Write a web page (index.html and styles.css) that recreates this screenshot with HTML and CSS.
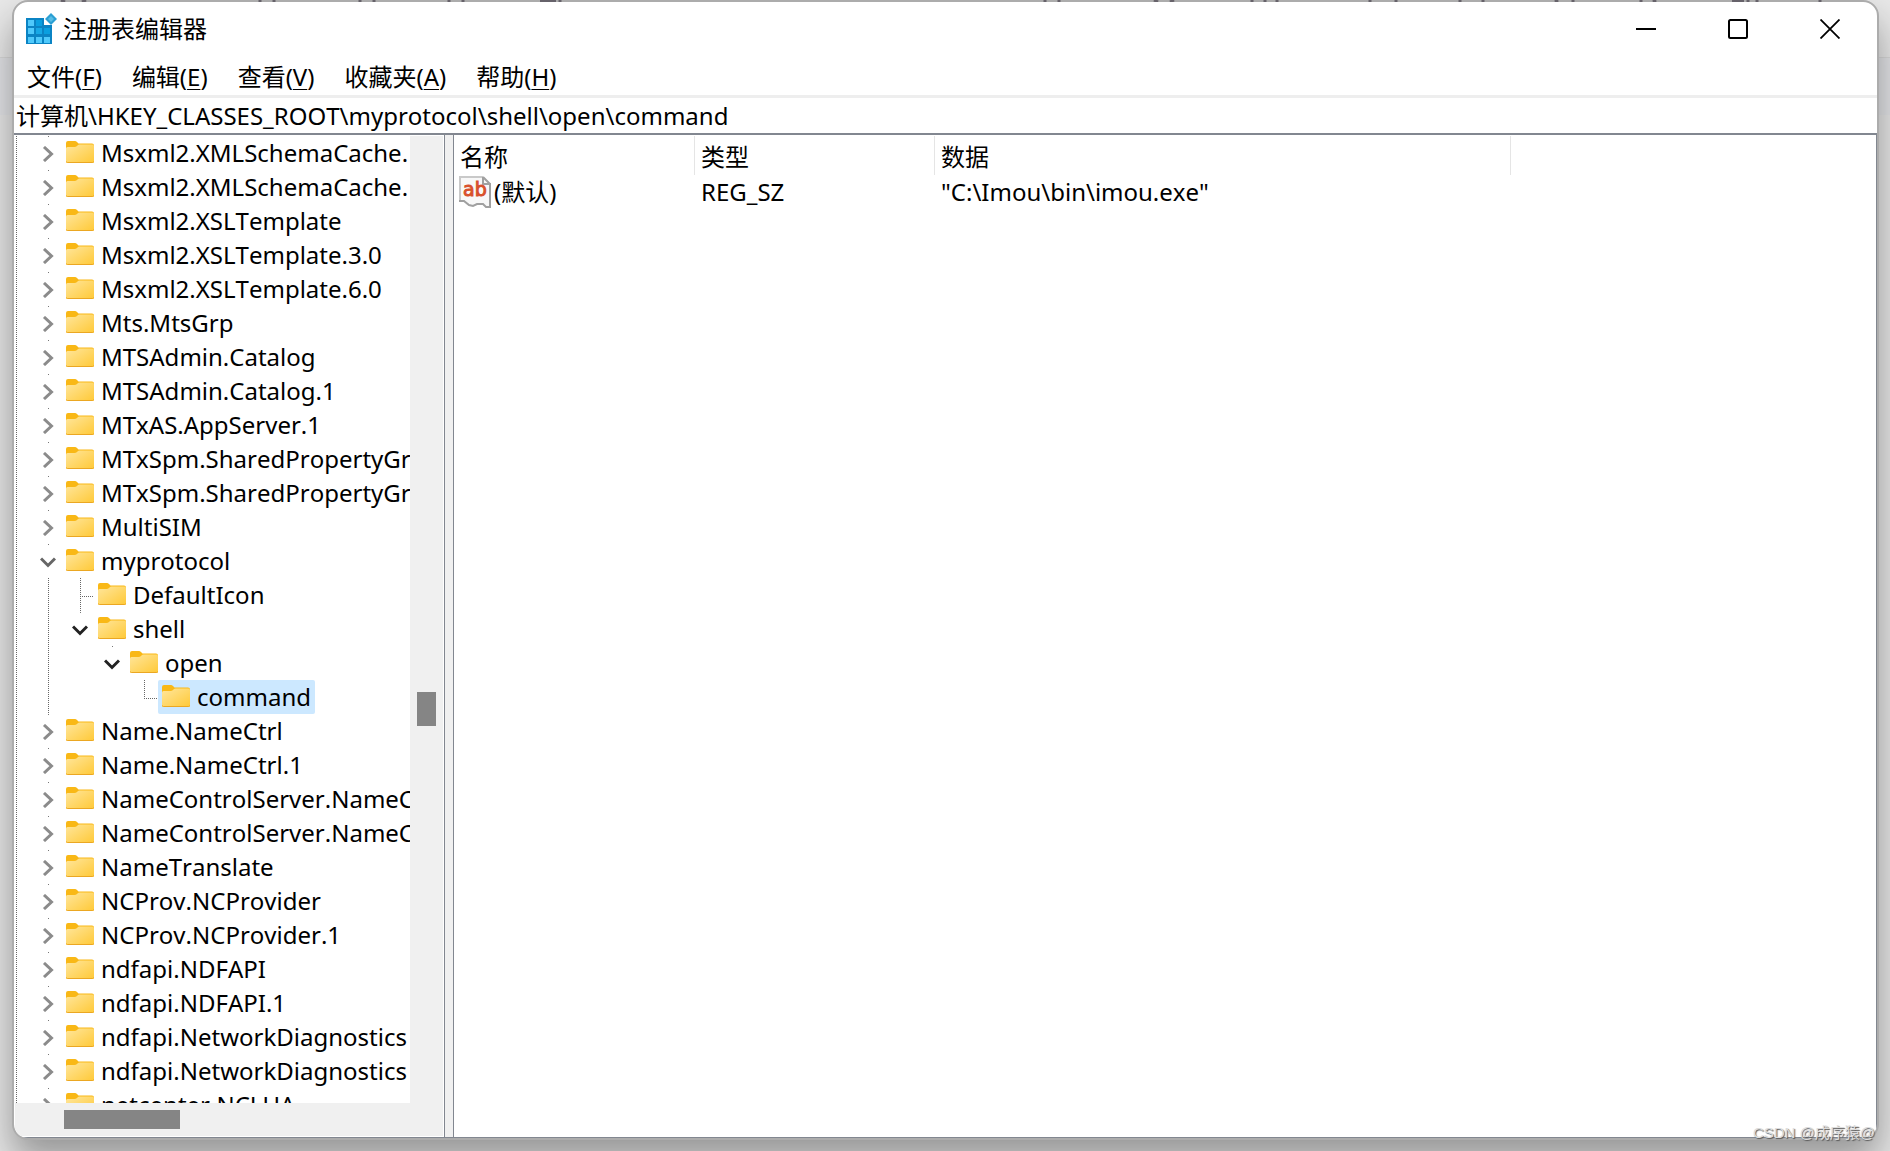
FILE: index.html
```
<!DOCTYPE html>
<html lang="zh-CN">
<head>
  <meta charset="UTF-8">
  <meta name="viewport" content="width=device-width, initial-scale=1.0">
  <title>注册表编辑器</title>
  <link rel="stylesheet" href="styles.css">
</head>
<body>
  <svg class="sprite" aria-hidden="true">
    <defs>
      <linearGradient id="folder-fill" x1="0" y1="0" x2="1" y2="1">
        <stop offset="0" stop-color="#ffe69c"/>
        <stop offset="1" stop-color="#ffc937"/>
      </linearGradient>
      <symbol id="folder" viewBox="0 0 28 22">
        <path d="M0 2Q0 0 2 0H9Q10 0 11 1L12.500 2.500H26Q28 2.500 28 4.500V8H0Z" fill="#f9b816"/>
        <path d="M0 7.500Q0 6 1.500 6H8.500Q10 6 11 5L12 4Q12.500 3.500 13.500 3.500H26.500Q28 3.500 28 5V20.500Q28 22 26.500 22H1.500Q0 22 0 20.500Z" fill="url(#folder-fill)"/>
        <path d="M0 20.300Q0.200 21.500 1.500 21.500H26.500Q27.800 21.500 28 20.300" fill="none" stroke="#eba722"/>
      </symbol>
      <symbol id="right" viewBox="0 0 16 16">
        <path d="M4 1L11.500 8L4 15" fill="none" stroke="#8b8b8b" stroke-width="3"/>
      </symbol>
      <symbol id="down" viewBox="0 0 16 16">
        <path d="M1 4.500L8 11.500L15 4.500" fill="none" stroke="currentColor" stroke-width="3"/>
      </symbol>
    </defs>
  </svg>

  <main class="window">
    <header class="titlebar">
      <svg class="app-icon" viewBox="0 0 32 32" aria-hidden="true">
        <path d="M0 5H18V12H26V31H0Z" fill="#0b84c4"/>
        <path d="M2 7H8V13H2ZM2 15H8V21H2ZM2 24H8V30H2ZM10 24H16V30H10ZM18 24H24V30H18Z" fill="#4fc9fb"/>
        <path d="M10 7H16V13H10ZM18 15H24V21H18Z" fill="#0a9fe0"/>
        <path d="M10 15H16V21H10Z" fill="#17a8e6"/>
        <path d="M25 0L31 6L25 12L19 6Z" fill="#2b9fd3"/>
        <path d="M25 3L28 6L25 9L22 6Z" fill="#58bde6"/>
      </svg>
      <h1>注册表编辑器</h1>
      <div class="controls">
        <button type="button" aria-label="最小化"><svg viewBox="0 0 20 20"><path d="M0 10H20" stroke-width="2"/></svg></button>
        <button type="button" aria-label="最大化"><svg viewBox="0 0 20 20"><rect x="1" y="1" width="18" height="18" rx="1.500" stroke-width="2"/></svg></button>
        <button type="button" aria-label="关闭"><svg viewBox="0 0 20 20"><path d="M0.500 0.500L19.500 19.500M19.500 0.500L0.500 19.500" stroke-width="1.800"/></svg></button>
      </div>
    </header>

    <nav class="menubar">
      <button type="button">文件(<u>F</u>)</button>
      <button type="button">编辑(<u>E</u>)</button>
      <button type="button">查看(<u>V</u>)</button>
      <button type="button">收藏夹(<u>A</u>)</button>
      <button type="button">帮助(<u>H</u>)</button>
    </nav>

    <input class="address" type="text" aria-label="地址" value="计算机\HKEY_CLASSES_ROOT\myprotocol\shell\open\command">

    <div class="panes">
      <section class="tree-pane">
        <div class="tree" role="tree">
          <div class="row" role="treeitem"><button class="toggle" type="button" aria-label="展开"><svg><use href="#right"/></svg></button><span class="key"><svg><use href="#folder"/></svg>Msxml2.XMLSchemaCache.</span></div>
          <div class="row" role="treeitem"><button class="toggle" type="button" aria-label="展开"><svg><use href="#right"/></svg></button><span class="key"><svg><use href="#folder"/></svg>Msxml2.XMLSchemaCache.</span></div>
          <div class="row" role="treeitem"><button class="toggle" type="button" aria-label="展开"><svg><use href="#right"/></svg></button><span class="key"><svg><use href="#folder"/></svg>Msxml2.XSLTemplate</span></div>
          <div class="row" role="treeitem"><button class="toggle" type="button" aria-label="展开"><svg><use href="#right"/></svg></button><span class="key"><svg><use href="#folder"/></svg>Msxml2.XSLTemplate.3.0</span></div>
          <div class="row" role="treeitem"><button class="toggle" type="button" aria-label="展开"><svg><use href="#right"/></svg></button><span class="key"><svg><use href="#folder"/></svg>Msxml2.XSLTemplate.6.0</span></div>
          <div class="row" role="treeitem"><button class="toggle" type="button" aria-label="展开"><svg><use href="#right"/></svg></button><span class="key"><svg><use href="#folder"/></svg>Mts.MtsGrp</span></div>
          <div class="row" role="treeitem"><button class="toggle" type="button" aria-label="展开"><svg><use href="#right"/></svg></button><span class="key"><svg><use href="#folder"/></svg>MTSAdmin.Catalog</span></div>
          <div class="row" role="treeitem"><button class="toggle" type="button" aria-label="展开"><svg><use href="#right"/></svg></button><span class="key"><svg><use href="#folder"/></svg>MTSAdmin.Catalog.1</span></div>
          <div class="row" role="treeitem"><button class="toggle" type="button" aria-label="展开"><svg><use href="#right"/></svg></button><span class="key"><svg><use href="#folder"/></svg>MTxAS.AppServer.1</span></div>
          <div class="row" role="treeitem"><button class="toggle" type="button" aria-label="展开"><svg><use href="#right"/></svg></button><span class="key"><svg><use href="#folder"/></svg>MTxSpm.SharedPropertyGr</span></div>
          <div class="row" role="treeitem"><button class="toggle" type="button" aria-label="展开"><svg><use href="#right"/></svg></button><span class="key"><svg><use href="#folder"/></svg>MTxSpm.SharedPropertyGr</span></div>
          <div class="row" role="treeitem"><button class="toggle" type="button" aria-label="展开"><svg><use href="#right"/></svg></button><span class="key"><svg><use href="#folder"/></svg>MultiSIM</span></div>
          <div class="row" role="treeitem" aria-expanded="true"><button class="toggle open dim" type="button" aria-label="折叠"><svg><use href="#down"/></svg></button><span class="key"><svg><use href="#folder"/></svg>myprotocol</span></div>
          <div class="row" role="treeitem"><i class="guide line"></i><i class="guide tee"></i><span class="key"><svg><use href="#folder"/></svg>DefaultIcon</span></div>
          <div class="row" role="treeitem" aria-expanded="true"><i class="guide line"></i><button class="toggle open" type="button" aria-label="折叠"><svg><use href="#down"/></svg></button><span class="key"><svg><use href="#folder"/></svg>shell</span></div>
          <div class="row" role="treeitem" aria-expanded="true"><i class="guide line"></i><i class="guide"></i><button class="toggle open" type="button" aria-label="折叠"><svg><use href="#down"/></svg></button><span class="key"><svg><use href="#folder"/></svg>open</span></div>
          <div class="row" role="treeitem" aria-selected="true"><i class="guide line"></i><i class="guide"></i><i class="guide"></i><i class="guide elbow"></i><span class="key selected"><svg><use href="#folder"/></svg>command</span></div>
          <div class="row" role="treeitem"><button class="toggle" type="button" aria-label="展开"><svg><use href="#right"/></svg></button><span class="key"><svg><use href="#folder"/></svg>Name.NameCtrl</span></div>
          <div class="row" role="treeitem"><button class="toggle" type="button" aria-label="展开"><svg><use href="#right"/></svg></button><span class="key"><svg><use href="#folder"/></svg>Name.NameCtrl.1</span></div>
          <div class="row" role="treeitem"><button class="toggle" type="button" aria-label="展开"><svg><use href="#right"/></svg></button><span class="key"><svg><use href="#folder"/></svg>NameControlServer.NameC</span></div>
          <div class="row" role="treeitem"><button class="toggle" type="button" aria-label="展开"><svg><use href="#right"/></svg></button><span class="key"><svg><use href="#folder"/></svg>NameControlServer.NameC</span></div>
          <div class="row" role="treeitem"><button class="toggle" type="button" aria-label="展开"><svg><use href="#right"/></svg></button><span class="key"><svg><use href="#folder"/></svg>NameTranslate</span></div>
          <div class="row" role="treeitem"><button class="toggle" type="button" aria-label="展开"><svg><use href="#right"/></svg></button><span class="key"><svg><use href="#folder"/></svg>NCProv.NCProvider</span></div>
          <div class="row" role="treeitem"><button class="toggle" type="button" aria-label="展开"><svg><use href="#right"/></svg></button><span class="key"><svg><use href="#folder"/></svg>NCProv.NCProvider.1</span></div>
          <div class="row" role="treeitem"><button class="toggle" type="button" aria-label="展开"><svg><use href="#right"/></svg></button><span class="key"><svg><use href="#folder"/></svg>ndfapi.NDFAPI</span></div>
          <div class="row" role="treeitem"><button class="toggle" type="button" aria-label="展开"><svg><use href="#right"/></svg></button><span class="key"><svg><use href="#folder"/></svg>ndfapi.NDFAPI.1</span></div>
          <div class="row" role="treeitem"><button class="toggle" type="button" aria-label="展开"><svg><use href="#right"/></svg></button><span class="key"><svg><use href="#folder"/></svg>ndfapi.NetworkDiagnostics</span></div>
          <div class="row" role="treeitem"><button class="toggle" type="button" aria-label="展开"><svg><use href="#right"/></svg></button><span class="key"><svg><use href="#folder"/></svg>ndfapi.NetworkDiagnostics</span></div>
          <div class="row" role="treeitem"><button class="toggle" type="button" aria-label="展开"><svg><use href="#right"/></svg></button><span class="key"><svg><use href="#folder"/></svg>netcenter.NCLUA</span></div>
        </div>
        <div class="scroll-y"><div class="thumb-y"></div></div>
        <div class="scroll-x"><div class="thumb-x"></div></div>
      </section>

      <section class="list-pane">
        <table class="values">
          <colgroup>
            <col class="col-name">
            <col class="col-type">
            <col class="col-data">
          </colgroup>
          <thead>
            <tr><th>名称</th><th>类型</th><th>数据</th></tr>
          </thead>
          <tbody>
            <tr>
              <td>
                <div class="value-name">
                  <svg class="value-icon" viewBox="0 0 32 32" aria-hidden="true">
                    <path d="M1 25V1H24L31 8V31H27L24 28H18L15 29H11L5 25Z" fill="#f8f8f8"/>
                    <path d="M1 25V1H24" fill="none" stroke="#c9c9c9" stroke-width="2"/>
                    <path d="M24 1V8H31V31H27L24 28H18L14 30L10 29L5 25H0M24 1L31 8" fill="none" stroke="#a0a0a0" stroke-width="2"/>
                    <text x="4" y="20">ab</text>
                  </svg>
                  <span>(默认)</span>
                </div>
              </td>
              <td>REG_SZ</td>
              <td>"C:\Imou\bin\imou.exe"</td>
            </tr>
          </tbody>
        </table>
      </section>
    </div>
  </main>

  <!-- bottom edge of the window behind -->
  <svg class="behind" width="1890" height="2" aria-hidden="true">
    <path d="M61 0L65 2M86 0L82 2M260 0V2M274 0V2M360 0V2M374 0V2M449 0V2M463 0V2M540 1H556M560 0V2M1045 0V2M1059 0V2M1154 0L1158 2M1174 0L1170 2M1252 0V2M1265 0V2M1277 0V2M1370 0V2M1396 0V2M1460 0V2M1483 0V2M1558 0L1555 2M1573 0V2M1641 0V2M1656 0L1653 2M1732 1H1744M1748 0V2M1757 0V2M1820 0V2" stroke="#66626a" stroke-width="3"/>
  </svg>
  <div class="watermark">CSDN @成序猿@</div>
</body>
</html>
```
FILE: styles.css
```
* {
  box-sizing: border-box;
}
body {
  margin: 0;
  height: 100vh;
  padding: 0 11px 11px 12px;
  overflow: hidden;
  font-family: "Noto Sans", "Noto Sans CJK SC", sans-serif;
  font-size: 24px;
  font-kerning: none;
  color: #000;
  background: linear-gradient(#e8e8e8 57px, #d8d8d8 57px 58px, #e2e3e6 58px 115px, #e6e6e6 115px);
}
button {
  border: none;
  padding: 0;
  background: none;
  font: inherit;
  font-kerning: none;
  color: inherit;
}
.sprite {
  position: absolute;
  width: 0;
  height: 0;
}
.window {
  display: flex;
  flex-direction: column;
  height: 100%;
  border: 2px solid #acacac;
  border-radius: 16px;
  overflow: hidden;
  background: #fff;
  box-shadow: 0 20px 36px rgba(0, 0, 0, 0.35);
}
.behind {
  position: absolute;
  top: 0;
  left: 0;
}

/* title bar */
.titlebar {
  display: flex;
  align-items: center;
  height: 56px;
  padding: 0 1px 2px 12px;
  flex: none;
}
.app-icon {
  width: 32px;
  height: 32px;
}
.titlebar h1 {
  margin: 0 0 0 5px;
  font-size: 24px;
  font-weight: normal;
  line-height: 54px;
}
.controls {
  display: flex;
  margin-left: auto;
}
.controls button {
  width: 92px;
  height: 54px;
}
.controls svg {
  display: block;
  width: 20px;
  height: 20px;
  margin: 0 auto;
  fill: none;
  stroke: #000;
}

/* menu */
.menubar {
  display: flex;
  gap: 30px;
  height: 37px;
  padding-left: 13px;
  flex: none;
}
.menubar button {
  line-height: 37px;
}
u {
  text-underline-offset: 3px;
  text-decoration-thickness: 1px;
}
.address {
  height: 40px;
  padding: 0 2px 2px;
  flex: none;
  border: none;
  border-top: 3px solid #eee;
  border-bottom: 2px solid #828790;
  outline: none;
  font: inherit;
  font-kerning: none;
  color: inherit;
  background: #fff;
}

/* panes */
.panes {
  display: flex;
  flex: 1;
  min-height: 0;
  border-bottom: 1px solid #828790;
}
.tree-pane {
  display: grid;
  grid-template-columns: 1fr 33px;
  grid-template-rows: 1fr 33px;
  width: 431px;
  padding: 1px;
  border-right: 1px solid #828790;
  flex: none;
}
.tree {
  margin-left: 1px;
  overflow: hidden;
  padding-left: 14px;
  background: repeating-linear-gradient(#666 0 1px, #fff 1px 2px) left top / 1px 100% no-repeat;
}
.row {
  display: flex;
  height: 34px;
  white-space: nowrap;
}
.toggle, .guide {
  width: 32px;
  height: 34px;
  flex: none;
}
.toggle {
  background: linear-gradient(#777, #777) 18px 0 / 1px 1px no-repeat;
}
.toggle svg {
  display: block;
  width: 16px;
  height: 16px;
  margin: 2px auto 0 10px;
}
.toggle.open {
  color: #222;
}
.toggle.dim {
  color: #666;
}
.line {
  background: repeating-linear-gradient(#666 0 1px, #fff 1px 2px) 18px 0 / 1px 100% no-repeat;
}
.tee, .elbow {
  background:
    repeating-linear-gradient(#666 0 1px, #fff 1px 2px) 18px 0 / 1px 100% no-repeat,
    repeating-linear-gradient(90deg, #666 0 1px, #fff 1px 2px) 18px 18px / 14px 1px no-repeat;
}
.elbow {
  background-size: 1px 18px, 14px 1px;
}
.key {
  display: flex;
  align-items: center;
  gap: 7px;
  padding: 0 4px;
  border-radius: 2px;
  line-height: 34px;
}
.key svg {
  width: 28px;
  height: 22px;
  margin-bottom: 2px;
  flex: none;
}
.selected {
  background: #cce8ff;
}
.scroll-y, .scroll-x {
  background: #f0f0f0;
}
.scroll-y {
  display: flex;
  flex-direction: column;
  padding: 556px 7px 0;
}
.thumb-y {
  height: 34px;
  background: #858585;
}
.scroll-x {
  grid-column: 1 / 3;
  padding: 7px 0 7px 49px;
}
.thumb-x {
  width: 116px;
  height: 19px;
  background: #858585;
}

/* value list */
.list-pane {
  flex: 1;
  margin-left: 8px;
  padding-top: 1px;
  border-left: 1px solid #828790;
  border-right: 1px solid #828790;
  box-shadow: -8px 0 #f0f0f0;
}
.values {
  width: 1057px;
  table-layout: fixed;
  border-collapse: separate;
  border-spacing: 0;
}
.col-name {
  width: 241px;
}
.col-type {
  width: 240px;
}
.values th {
  height: 39px;
  padding: 2px 6px 0;
  border-right: 1px solid #e5e5e5;
  font-weight: normal;
  line-height: 36px;
  text-align: left;
}
.values td {
  height: 34px;
  padding: 0 6px;
  line-height: 34px;
}
.values td:first-child {
  padding: 0 5px;
}
.value-name {
  display: flex;
  align-items: center;
  gap: 3px;
}
.value-icon {
  width: 32px;
  height: 32px;
}
.value-icon text {
  font: 19px "DejaVu Sans", sans-serif;
  fill: #d9512c;
  stroke: #d9512c;
}
.watermark {
  position: absolute;
  right: 15px;
  bottom: 8px;
  font-family: "Liberation Sans", "Noto Sans CJK SC", sans-serif;
  font-size: 15px;
  line-height: 20px;
  color: #ddd;
  text-shadow: 1px 1px 1px #555;
}
```
